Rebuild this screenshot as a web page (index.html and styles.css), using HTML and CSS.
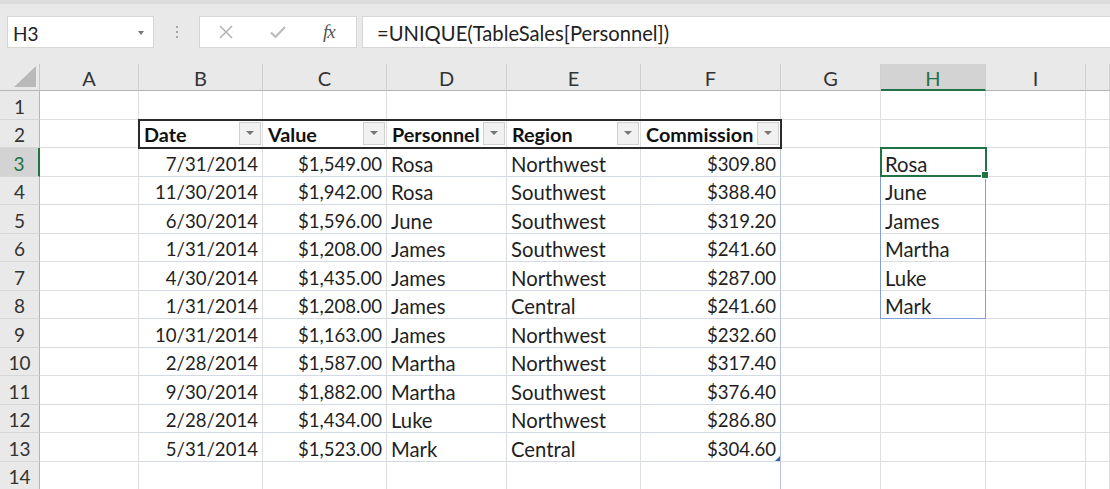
FILE: index.html
```html
<!DOCTYPE html>
<html>
<head>
<meta charset="utf-8">
<link rel="stylesheet" href="styles.css">
</head>
<body>
<div class="toolbar">
  <div class="namebox"><span class="nb-text">H3</span><span class="nb-arrow"></span></div>
  <div class="dots"><i></i><i></i><i></i></div>
  <div class="fbtns">
    <svg class="ic-x" width="16" height="16" viewBox="0 0 16 16"><path d="M2 2 L14 14 M14 2 L2 14" stroke="#b3b3b3" stroke-width="1.6" fill="none"/></svg>
    <svg class="ic-ok" width="18" height="16" viewBox="0 0 18 16"><path d="M2 8.5 L6.5 13 L16 3" stroke="#bcbcbc" stroke-width="2.2" fill="none"/></svg>
    <span class="fx">fx</span>
  </div>
  <div class="formula">=UNIQUE(TableSales[Personnel])</div>
</div>
<div class="sheetwrap">
<div class="sheet">
  <div class="corner"><span class="tri"></span></div>
  <div class="ch">A</div><div class="ch">B</div><div class="ch">C</div><div class="ch">D</div><div class="ch">E</div><div class="ch">F</div><div class="ch">G</div><div class="ch sel">H</div><div class="ch">I</div><div class="ch"></div>

  <div class="rh">1</div><div class="c"></div><div class="c"></div><div class="c"></div><div class="c"></div><div class="c"></div><div class="c"></div><div class="c"></div><div class="c"></div><div class="c"></div><div class="c"></div>

  <div class="rh">2</div><div class="c"></div>
  <div class="c th"><span>Date</span><b class="fb"></b></div>
  <div class="c th"><span>Value</span><b class="fb"></b></div>
  <div class="c th"><span>Personnel</span><b class="fb"></b></div>
  <div class="c th"><span>Region</span><b class="fb"></b></div>
  <div class="c th"><span>Commission</span><b class="fb"></b></div>
  <div class="c"></div><div class="c"></div><div class="c"></div><div class="c"></div>

  <div class="rh sel">3</div><div class="c"></div><div class="c t r">7/31/2014</div><div class="c t r">$1,549.00</div><div class="c t w">Rosa</div><div class="c t w">Northwest</div><div class="c t r tl">$309.80</div><div class="c"></div><div class="c w">Rosa</div><div class="c"></div><div class="c"></div>

  <div class="rh">4</div><div class="c"></div><div class="c t r">11/30/2014</div><div class="c t r">$1,942.00</div><div class="c t w">Rosa</div><div class="c t w">Southwest</div><div class="c t r tl">$388.40</div><div class="c"></div><div class="c w">June</div><div class="c"></div><div class="c"></div>

  <div class="rh">5</div><div class="c"></div><div class="c t r">6/30/2014</div><div class="c t r">$1,596.00</div><div class="c t w">June</div><div class="c t w">Southwest</div><div class="c t r tl">$319.20</div><div class="c"></div><div class="c w">James</div><div class="c"></div><div class="c"></div>

  <div class="rh">6</div><div class="c"></div><div class="c t r">1/31/2014</div><div class="c t r">$1,208.00</div><div class="c t w">James</div><div class="c t w">Southwest</div><div class="c t r tl">$241.60</div><div class="c"></div><div class="c w">Martha</div><div class="c"></div><div class="c"></div>

  <div class="rh">7</div><div class="c"></div><div class="c t r">4/30/2014</div><div class="c t r">$1,435.00</div><div class="c t w">James</div><div class="c t w">Northwest</div><div class="c t r tl">$287.00</div><div class="c"></div><div class="c w">Luke</div><div class="c"></div><div class="c"></div>

  <div class="rh">8</div><div class="c"></div><div class="c t r">1/31/2014</div><div class="c t r">$1,208.00</div><div class="c t w">James</div><div class="c t w">Central</div><div class="c t r tl">$241.60</div><div class="c"></div><div class="c w">Mark</div><div class="c"></div><div class="c"></div>

  <div class="rh">9</div><div class="c"></div><div class="c t r">10/31/2014</div><div class="c t r">$1,163.00</div><div class="c t w">James</div><div class="c t w">Northwest</div><div class="c t r tl">$232.60</div><div class="c"></div><div class="c"></div><div class="c"></div><div class="c"></div>

  <div class="rh">10</div><div class="c"></div><div class="c t r">2/28/2014</div><div class="c t r">$1,587.00</div><div class="c t w">Martha</div><div class="c t w">Northwest</div><div class="c t r tl">$317.40</div><div class="c"></div><div class="c"></div><div class="c"></div><div class="c"></div>

  <div class="rh">11</div><div class="c"></div><div class="c t r">9/30/2014</div><div class="c t r">$1,882.00</div><div class="c t w">Martha</div><div class="c t w">Southwest</div><div class="c t r tl">$376.40</div><div class="c"></div><div class="c"></div><div class="c"></div><div class="c"></div>

  <div class="rh">12</div><div class="c"></div><div class="c t r">2/28/2014</div><div class="c t r">$1,434.00</div><div class="c t w">Luke</div><div class="c t w">Northwest</div><div class="c t r tl">$286.80</div><div class="c"></div><div class="c"></div><div class="c"></div><div class="c"></div>

  <div class="rh">13</div><div class="c"></div><div class="c t r">5/31/2014</div><div class="c t r">$1,523.00</div><div class="c t w">Mark</div><div class="c t w">Central</div><div class="c t r tl">$304.60</div><div class="c"></div><div class="c"></div><div class="c"></div><div class="c"></div>

  <div class="rh">14</div><div class="c"></div><div class="c"></div><div class="c"></div><div class="c"></div><div class="c"></div><div class="c tl2"></div><div class="c"></div><div class="c"></div><div class="c"></div><div class="c"></div>
</div>
<div class="overlay">
  <div class="hdrbox"></div>
  <div class="spill"></div>
  <div class="cursor"><span class="handle"></span></div>
  <div class="resize"></div>
</div>
</div>
</body>
</html>
```
FILE: styles.css
```css
* { box-sizing: border-box; }
html, body { margin: 0; padding: 0; }
body {
  width: 1110px;
  height: 489px;
  overflow: hidden;
  background: #fff;
  font-family: Lato, "Liberation Sans", sans-serif;
  color: #222;
}
.toolbar {
  height: 64px;
  background: #e9e9e9;
  border-top: 4px solid #dcdcdc;
  display: flex;
  align-items: flex-start;
  padding-top: 12px;
  padding-left: 7px;
}
.namebox {
  width: 147px;
  height: 32px;
  background: #fff;
  border: 1px solid #d6d6d6;
  display: flex;
  align-items: center;
  justify-content: space-between;
  padding: 2px 9px 0 5px;
  font-size: 19px;
  color: #222;
}
.nb-arrow {
  width: 0; height: 0;
  border-left: 3.5px solid transparent;
  border-right: 3.5px solid transparent;
  border-top: 4px solid #777;
}
.dots {
  width: 45px;
  height: 32px;
  display: flex;
  flex-direction: column;
  align-items: center;
  justify-content: center;
  gap: 3px;
}
.dots i {
  display: block;
  width: 2px; height: 2px;
  background: #a8a8a8;
}
.fbtns {
  width: 158px;
  height: 32px;
  background: #fff;
  border: 1px solid #d6d6d6;
  display: flex;
  align-items: center;
  padding-left: 18px;
}
.ic-x { margin-right: 35px; }
.ic-ok { margin-right: 36px; }
.fx {
  font-family: "Liberation Serif", serif;
  font-style: italic;
  font-size: 19px;
  color: #555;
  letter-spacing: -1px;
}
.formula {
  margin-left: 5px;
  flex: 1;
  height: 32px;
  background: #fff;
  border: 1px solid #d6d6d6;
  border-right: none;
  padding: 2px 0 0 14px;
  display: flex;
  align-items: center;
  font-size: 20.2px;
  color: #222;
}
.sheetwrap {
  display: grid;
}
.sheet, .overlay {
  grid-area: 1 / 1;
  display: grid;
  grid-template-columns: 40px 99px 124px 124px 120px 134px 140px 100px 105px 100px 24px;
  grid-template-rows: 27px repeat(14, 28.5px);
}
.overlay { pointer-events: none; }
.corner {
  background: #e9e9e9;
  border-right: 1px solid #c8c8c8;
  border-bottom: 1px solid #b5b5b5;
  display: flex;
  align-items: flex-end;
  justify-content: flex-end;
  padding: 0 3px 3px 0;
}
.tri {
  width: 0; height: 0;
  border-left: 22px solid transparent;
  border-bottom: 21px solid #b9b9b9;
}
.ch {
  background: #e9e9e9;
  border-right: 1px solid #cfcfcf;
  border-bottom: 1px solid #b5b5b5;
  display: flex;
  align-items: center;
  justify-content: center;
  padding-top: 2px;
  font-size: 20px;
  color: #333;
}
.ch.sel {
  background: #d3d3d3;
  color: #217346;
  border-bottom: 2px solid #217346;
}
.rh {
  background: #e9e9e9;
  border-right: 1px solid #b5b5b5;
  border-bottom: 1px solid #d6d6d6;
  display: flex;
  align-items: center;
  justify-content: center;
  padding-top: 3px;
  font-size: 19px;
  color: #333;
}
.rh.sel {
  background: #d3d3d3;
  color: #217346;
  border-right: 2px solid #217346;
}
.c {
  border-right: 1px solid #dedede;
  border-bottom: 1px solid #dedede;
  display: flex;
  align-items: center;
  padding: 4px 4px 0 4px;
  font-size: 18.6px;
  color: #1f1f1f;
  white-space: nowrap;
  overflow: hidden;
}
.c.w { font-size: 20.3px; }
.c.r { justify-content: flex-end; }
.c.t { border-bottom-color: #d3dae6; }
.c.tl, .c.tl2 { border-right-color: #b7c3da; }
.c.th {
  font-weight: 700;
  font-size: 19.8px;
  padding: 1px 1px 0 5px;
  justify-content: space-between;
  color: #111;
}
.fb {
  width: 22px;
  height: 23px;
  margin-top: -1px;
  background: #f1f1f1;
  border: 1px solid #d0d0d0;
  display: flex;
  align-items: center;
  justify-content: center;
  flex: none;
}
.fb::after {
  content: "";
  width: 0; height: 0;
  border-left: 4px solid transparent;
  border-right: 4px solid transparent;
  border-top: 4px solid #777;
}
.hdrbox {
  grid-column: 3 / 8;
  grid-row: 3;
  margin: -1px -1px -1px -1px;
  border: 2px solid #2a2a2a;
}
.spill {
  grid-column: 9;
  grid-row: 4 / 10;
  margin: -1px 0 0 -1px;
  border: 1px solid #7f9fd6;
}
.cursor {
  grid-column: 9;
  grid-row: 4;
  margin: -1px -1px 0 -1px;
  border: 2px solid #217346;
  position: relative;
}
.handle {
  position: absolute;
  right: -4px;
  bottom: -4px;
  width: 6px;
  height: 6px;
  background: #217346;
  border: 1px solid #fff;
  box-sizing: content-box;
}
.resize {
  grid-column: 7;
  grid-row: 14;
  justify-self: end;
  align-self: end;
  width: 0; height: 0;
  border-left: 5px solid transparent;
  border-bottom: 5px solid #3d5fa8;
  margin: 0 1px 1px 0;
}
```
